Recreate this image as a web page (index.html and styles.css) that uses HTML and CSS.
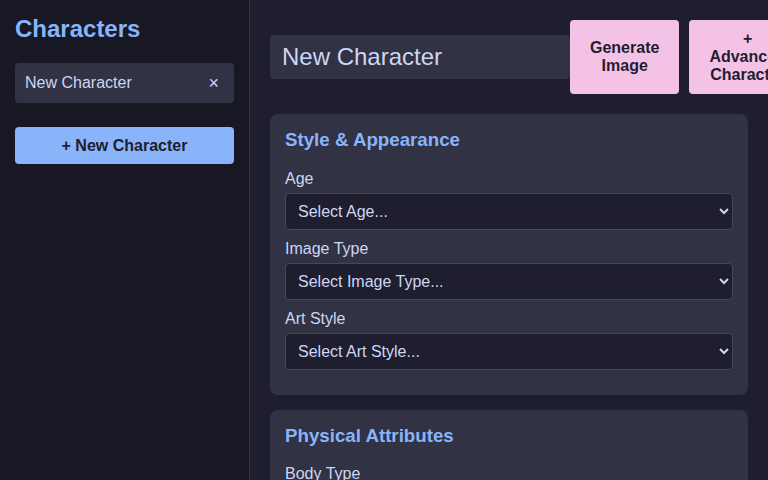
FILE: index.html
```html
<!DOCTYPE html>
<html>
<head>
<meta charset="utf-8">
<link rel="stylesheet" href="styles.css">
</head>
<body>
<div class="app">
  <aside class="sidebar">
    <h2 class="sidebar-title">Characters</h2>
    <div class="char-item">
      <span class="char-name">New Character</span>
      <button class="char-remove">×</button>
    </div>
    <button class="btn-new">+ New Character</button>
  </aside>
  <main class="main">
    <div class="header">
      <input class="name-input" type="text" value="New Character">
      <div class="header-actions">
        <button class="btn-pink">Generate Image</button>
        <button class="btn-pink">+ Advanced Character</button>
      </div>
    </div>
    <section class="card">
      <h3 class="card-title">Style &amp; Appearance</h3>
      <div class="field">
        <label class="field-label">Age</label>
        <select class="field-select"><option>Select Age...</option></select>
      </div>
      <div class="field">
        <label class="field-label">Image Type</label>
        <select class="field-select"><option>Select Image Type...</option></select>
      </div>
      <div class="field">
        <label class="field-label">Art Style</label>
        <select class="field-select"><option>Select Art Style...</option></select>
      </div>
    </section>
    <section class="card">
      <h3 class="card-title">Physical Attributes</h3>
      <div class="field">
        <label class="field-label">Body Type</label>
        <select class="field-select"><option>Select Body Type...</option></select>
      </div>
    </section>
  </main>
</div>
</body>
</html>
```

FILE: styles.css
```css
* { box-sizing: border-box; }
html, body {
  margin: 0;
  height: 100%;
  overflow: hidden;
}
body {
  font-family: "Liberation Sans", Arial, sans-serif;
  background: #1e1e2e;
  color: #cdd6f4;
}
.app {
  display: flex;
  height: 100%;
}
.sidebar {
  width: 250px;
  flex-shrink: 0;
  background: #181825;
  border-right: 1px solid #313244;
  padding: 15px;
}
.sidebar-title {
  margin: 0 0 20px;
  font-size: 24px;
  color: #89b4fa;
}
.char-item {
  display: flex;
  align-items: center;
  justify-content: space-between;
  height: 40px;
  padding: 0 10px;
  background: #313244;
  border-radius: 4px;
}
.char-name { font-size: 16px; }
.char-remove {
  background: none;
  border: none;
  color: #cdd6f4;
  font-family: inherit;
  font-size: 18px;
  padding: 0 5px;
  cursor: pointer;
}
.btn-new {
  display: block;
  width: 100%;
  margin-top: 24px;
  padding: 9.5px 10px;
  background: #89b4fa;
  color: #1e1e2e;
  border: none;
  border-radius: 4px;
  font-family: inherit;
  font-size: 16px;
  font-weight: bold;
}
.main {
  flex: 1;
  min-width: 0;
  padding: 20px;
}
.header {
  display: flex;
  align-items: center;
  margin-bottom: 20px;
}
.name-input {
  width: 300px;
  flex-shrink: 0;
  padding: 8px 12px;
  font-family: inherit;
  font-size: 24px;
  color: #cdd6f4;
  background: #313244;
  border: none;
  border-radius: 4px;
  outline: none;
}
.header-actions {
  display: flex;
  gap: 10px;
}
.btn-pink {
  padding: 10px 20px;
  background: #f5c2e7;
  color: #1e1e2e;
  border: none;
  border-radius: 4px;
  font-family: inherit;
  font-size: 16px;
  font-weight: bold;
}
.card {
  background: #313244;
  border-radius: 8px;
  padding: 15px;
  margin-bottom: 15px;
}
.card-title {
  margin: 0 0 18.72px;
  font-size: 18.72px;
  color: #89b4fa;
}
.field { margin-bottom: 10px; }
.field-label {
  display: block;
  font-size: 16px;
  margin-bottom: 5px;
}
.field-select {
  display: block;
  width: 100%;
  padding: 8px 8px;
  font-family: inherit;
  font-size: 16px;
  color: #cdd6f4;
  background: #1e1e2e;
  border: 1px solid #45475a;
  border-radius: 4px;
  color-scheme: dark;
}
```
